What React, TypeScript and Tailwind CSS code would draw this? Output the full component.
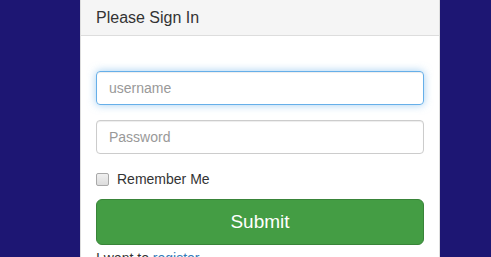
export default function App() {
  return (
    <div
      className="w-full h-[257px] overflow-hidden bg-[#1d1673] pl-[80px]"
      style={{ fontFamily: '"Liberation Sans", Arial, sans-serif' }}
    >
      <div className="w-[360px] h-[257px] bg-white border-x border-[#ddd]">
        <div className="h-[36px] bg-[#f5f5f5] border-b border-[#ddd] px-[15px] flex items-center">
          <span className="text-[16px] text-[#333] leading-none">Please Sign In</span>
        </div>
        <div className="px-[15px] pt-[35px]">
          <div className="h-[34px] rounded-[4px] border border-[#66afe9] shadow-[inset_0_1px_1px_rgba(0,0,0,0.075),0_0_8px_rgba(102,175,233,0.6)] px-[12px] flex items-center text-[14px] text-[#999]">
            username
          </div>
          <div className="mt-[15px] h-[34px] rounded-[4px] border border-[#ccc] shadow-[inset_0_1px_1px_rgba(0,0,0,0.075)] px-[12px] flex items-center text-[14px] text-[#999]">
            Password
          </div>
          <div className="mt-[15px] h-[20px] flex items-center">
            <span className="w-[13px] h-[13px] rounded-[2px] border border-[#a9a9a9] bg-gradient-to-b from-[#f0f0f0] to-[#dcdcdc]" />
            <span className="ml-[8px] text-[14px] text-[#333]">Remember Me</span>
          </div>
          <div className="mt-[10px] h-[46px] rounded-[6px] bg-[#449d44] border border-[#398439] flex items-center justify-center text-white text-[19px]">
            Submit
          </div>
          <div className="mt-[3px] text-[14px] leading-[20px] text-[#333]">
            I want to <span className="text-[#337ab7]">register</span>
          </div>
        </div>
      </div>
    </div>
  );
}
